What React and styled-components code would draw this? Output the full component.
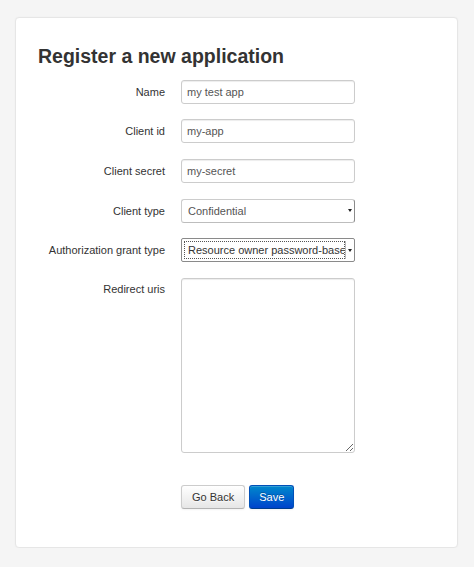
import styled, { createGlobalStyle } from "styled-components"

const GlobalStyle = createGlobalStyle`
    html, body {
        margin: 0;
        padding: 0;
        background: #f5f5f5;
        font-family: "Liberation Sans", Arial, sans-serif;
        color: #333333;
    }
`

const fields = [
    { label: "Name", value: "my test app" },
    { label: "Client id", value: "my-app" },
    { label: "Client secret", value: "my-secret" },
]

export default function App(){
    return(
        <>
            <GlobalStyle />
            <Card>
                <Title>Register a new application</Title>
                <Form onSubmit={e => e.preventDefault()}>
                    {fields.map(f => (
                        <Row key={f.label}>
                            <Label>{f.label}</Label>
                            <Input type="text" defaultValue={f.value} />
                        </Row>
                    ))}
                    <Row>
                        <Label>Client type</Label>
                        <Select>
                            <span>Confidential</span>
                            <Arrow />
                        </Select>
                    </Row>
                    <Row>
                        <Label>Authorization grant type</Label>
                        <Select focused>
                            <span>Resource owner password-based</span>
                            <Arrow boxed />
                        </Select>
                    </Row>
                    <Row top>
                        <Label top>Redirect uris</Label>
                        <TextArea />
                    </Row>
                    <Actions>
                        <Button type="button">Go Back</Button>
                        <Button type="submit" primary>Save</Button>
                    </Actions>
                </Form>
            </Card>
        </>
    )
}

const Card = styled.div`
    box-sizing: border-box;
    margin: 17px 0 0 15px;
    width: 443px;
    height: 531px;
    background: #ffffff;
    border: 1px solid #e6e6e6;
    border-radius: 4px;
    box-shadow: 0 0 2px rgba(0,0,0,0.04);
    padding: 25px 22px 0 22px;
`

const Title = styled.h1`
    margin: 0 0 10.5px 0;
    font-size: 19.5px;
    line-height: 26px;
    font-weight: 700;
    color: #333333;
`

const Form = styled.form`
    display: flex;
    flex-direction: column;
`

const Row = styled.div`
    display: flex;
    align-items: ${p => p.top ? "flex-start" : "center"};
    gap: 16px;
    margin-bottom: 15.7px;
`

const Label = styled.label`
    width: 127px;
    flex: none;
    text-align: right;
    font-size: 11px;
    line-height: 16px;
    color: #333333;
    padding-top: ${p => p.top ? "3px" : "0"};
`

const Input = styled.input`
    box-sizing: border-box;
    width: 174px;
    height: 24px;
    margin: 0;
    padding: 3px 5px;
    font-family: "Liberation Sans", Arial, sans-serif;
    font-size: 11px;
    color: #555555;
    border: 1px solid #cccccc;
    border-radius: 3px;
    box-shadow: inset 0 1px 1px rgba(0,0,0,0.075);
    outline: none;
`

const Select = styled.div`
    box-sizing: border-box;
    width: 174px;
    height: 24px;
    display: flex;
    align-items: center;
    border: 1px solid ${p => p.focused ? "#8a8a8a" : "#cccccc"};
    border-right-color: #8a8a8a;
    border-bottom-color: ${p => p.focused ? "#8a8a8a" : "#bdbdbd"};
    border-radius: ${p => p.focused ? "2px" : "3px"};
    background: #ffffff;
    padding: ${p => p.focused ? "2px 0 2px 2px" : "0 0 0 6px"};
    font-size: 11px;
    color: #555555;
    >span{
        flex: 1;
        min-width: 0;
        white-space: nowrap;
        overflow: hidden;
        line-height: ${p => p.focused ? "16px" : "22px"};
        padding: 0 0 0 ${p => p.focused ? "3px" : "0"};
        border: ${p => p.focused ? "1px dotted #555555" : "none"};
        color: ${p => p.focused ? "#333333" : "#555555"};
    }
`

const Arrow = styled.i`
    flex: none;
    width: 8px;
    align-self: stretch;
    display: flex;
    align-items: center;
    justify-content: center;
    border-left: ${p => p.boxed ? "1px solid #bbbbbb" : "none"};
    &::after{
        content: "";
        border-left: 2px solid transparent;
        border-right: 2px solid transparent;
        border-top: 3px solid #222222;
    }
`

const TextArea = styled.textarea`
    box-sizing: border-box;
    width: 174px;
    height: 175px;
    margin: 0;
    padding: 4px 6px;
    font-family: "Liberation Sans", Arial, sans-serif;
    font-size: 11px;
    border: 1px solid #cccccc;
    border-radius: 3px;
    box-shadow: inset 0 1px 1px rgba(0,0,0,0.075);
    outline: none;
`

const Actions = styled.div`
    display: flex;
    gap: 4px;
    margin: 16px 0 0 143px;
`

const Button = styled.button`
    box-sizing: border-box;
    height: 24px;
    padding: 0 ${p => p.primary ? "9px" : "10px"};
    font-family: "Liberation Sans", Arial, sans-serif;
    font-size: 11px;
    border-radius: 3px;
    cursor: pointer;
    color: ${p => p.primary ? "#ffffff" : "#333333"};
    border: 1px solid ${p => p.primary ? "#0050b8" : "#cccccc"};
    border-bottom-color: ${p => p.primary ? "#003d8f" : "#b3b3b3"};
    background: ${p => p.primary
        ? "linear-gradient(#0088cc, #0044cc)"
        : "linear-gradient(#ffffff, #e6e6e6)"};
    text-shadow: ${p => p.primary ? "0 -1px 0 rgba(0,0,0,0.25)" : "0 1px 1px rgba(255,255,255,0.75)"};
    box-shadow: inset 0 1px 0 rgba(255,255,255,0.2), 0 1px 2px rgba(0,0,0,0.05);
`
